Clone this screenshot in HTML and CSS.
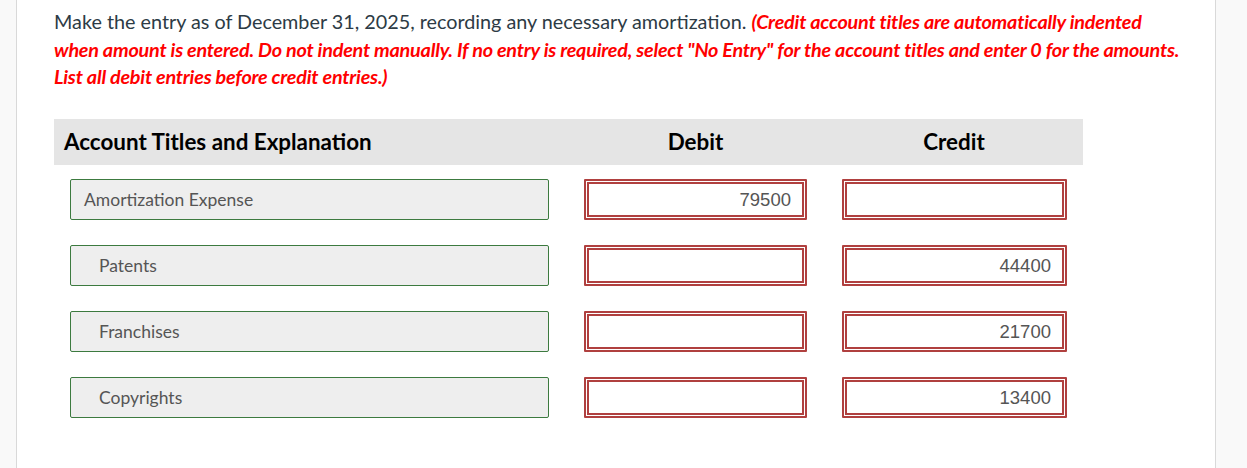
FILE: index.html
```html
<!DOCTYPE html>
<html lang="en">
<head>
  <meta charset="UTF-8">
  <title>Journal Entry</title>
  <link rel="stylesheet" href="styles.css">
</head>
<body>
  <div class="side side-left"></div>
  <div class="panel">
    <p class="question">
      Make the entry as of December 31, 2025, recording any necessary amortization.
      <span class="note">(Credit account titles are automatically indented when amount is entered. Do not indent manually. If no entry is required, select "No Entry" for the account titles and enter 0 for the amounts. List all debit entries before credit entries.)</span>
    </p>

    <!-- Journal table -->
    <div class="journal">
      <div class="row head">
        <div class="cell title">Account Titles and Explanation</div>
        <div class="cell amt">Debit</div>
        <div class="cell amt">Credit</div>
      </div>

      <div class="row">
        <div class="cell title"><div class="account">Amortization Expense</div></div>
        <div class="cell amt"><div class="amount">79500</div></div>
        <div class="cell amt"><div class="amount"></div></div>
      </div>

      <div class="row">
        <div class="cell title"><div class="account indent">Patents</div></div>
        <div class="cell amt"><div class="amount"></div></div>
        <div class="cell amt"><div class="amount">44400</div></div>
      </div>

      <div class="row">
        <div class="cell title"><div class="account indent">Franchises</div></div>
        <div class="cell amt"><div class="amount"></div></div>
        <div class="cell amt"><div class="amount">21700</div></div>
      </div>

      <div class="row">
        <div class="cell title"><div class="account indent">Copyrights</div></div>
        <div class="cell amt"><div class="amount"></div></div>
        <div class="cell amt"><div class="amount">13400</div></div>
      </div>
    </div>
  </div>
  <div class="side side-right"></div>
</body>
</html>
```

FILE: styles.css
```css
/* General Styling */
body {
  margin: 0;
  display: flex;
  height: 468px;
  overflow: hidden;
  font-family: 'Lato', 'Noto Sans', sans-serif;
  color: #2d3b45;
  background: #fff;
}

.side {
  background: #f9f9f9;
}

.side-left {
  width: 16px;
  border-right: 1px solid #d9d9d9;
}

.side-right {
  flex: 1;
  border-left: 1px solid #d9d9d9;
}

.panel {
  width: 1198px;
  padding: 8px 0 0 37px;
  box-sizing: border-box;
}

.question {
  margin: 0;
  font-size: 19.8px;
  line-height: 27.5px;
  width: 1130px;
}

.note {
  color: #ff0000;
  font-weight: bold;
  font-style: italic;
  letter-spacing: -0.22px;
}

/* Journal table */
.journal {
  width: 1029px;
  margin-top: 28px;
}

.row {
  display: grid;
  grid-template-columns: 512px 258px 259px;
  margin-bottom: 25px;
}

.cell.title {
  padding: 0 17px 0 16px;
}

.cell.amt {
  padding: 0 17px 0 18px;
}

.row.head {
  background: #e5e5e5;
  height: 46px;
  align-items: center;
  margin-bottom: 14px;
  font-weight: bold;
  font-size: 22.4px;
  color: #000;
}

.head .cell.title {
  padding-left: 10px;
}

.head .cell.amt {
  text-align: center;
}

.account {
  height: 41px;
  box-sizing: border-box;
  border: 1px solid #3c7a3f;
  border-radius: 2px;
  background: #eeeeee;
  padding-left: 13px;
  font-size: 17.5px;
  line-height: 39px;
  color: #555;
}

.account.indent {
  padding-left: 28px;
}

.amount {
  width: 223px;
  height: 41px;
  box-sizing: border-box;
  border: 5px double #b0403f;
  border-radius: 1px;
  background: #fff;
  padding-right: 11px;
  text-align: right;
  font-family: 'Liberation Sans', Arial, sans-serif;
  font-size: 18.5px;
  line-height: 31px;
  color: #555;
}

.cell.amt:last-child .amount {
  width: 225px;
}
```
